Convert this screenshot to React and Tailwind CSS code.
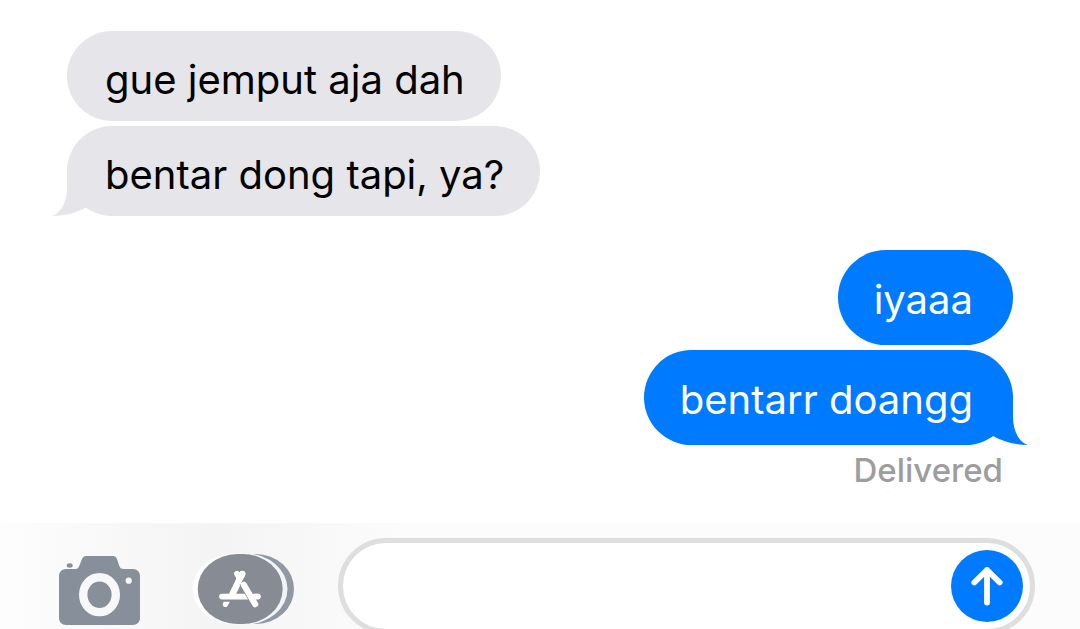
const messages = [
  { id: 1, text: 'gue jemput aja dah', mine: false },
  { id: 2, text: 'bentar dong tapi, ya?', mine: false, tail: true },
  { id: 3, text: 'iyaaa', mine: true },
  { id: 4, text: 'bentarr doangg', mine: true, tail: true },
];

function Tail({ mine }) {
  return (
    <svg
      viewBox="0 0 50 50"
      aria-hidden="true"
      className={`absolute bottom-0 h-[50px] w-[50px] ${
        mine ? '-right-[15px] -scale-x-100 text-[#007aff]' : '-left-[15px] text-[#e5e5ea]'
      }`}
    >
      <path
        fill="currentColor"
        d="M15 0V22C15 34 10 47 0 50C14 50 26 46 35 41L50 30V0Z"
      />
    </svg>
  );
}

function Bubble({ message }) {
  const { text, mine, tail } = message;

  return (
    <li
      className={`relative rounded-full text-[40px] ${
        mine
          ? 'bg-[#007aff] pr-10 pl-9 pt-1 leading-[91px] text-white'
          : 'bg-[#e5e5ea] pr-9 pl-[38px] pt-2 leading-[82px] text-black'
      }`}
    >
      {tail && <Tail mine={mine} />}
      <span className="relative">{text}</span>
    </li>
  );
}

function CameraIcon() {
  return (
    <svg viewBox="0 0 84 72" className="h-[72px] w-[84px]" aria-hidden="true">
      <g fill="#87909a">
        <path d="M8 15H17C20 15 21 13 22 10L24 5C25 3 26 2 28 2H55C57 2 58 3 59 5L61 11C62 14 63 15 66 15H75C79 15 82 18 82 22V64C82 68 79 71 75 71H8C4 71 1 68 1 64V22C1 18 4 15 8 15Z" />
        <ellipse cx="11.7" cy="11.5" rx="3" ry="2.2" />
      </g>
      <ellipse cx="41.5" cy="40.7" rx="16.3" ry="17.4" fill="none" stroke="#f8f8f9" strokeWidth="8.4" />
      <circle cx="70.7" cy="26.7" r="3.1" fill="#f8f8f9" />
    </svg>
  );
}

function AppStoreIcon() {
  return (
    <svg viewBox="0 0 104 72" className="h-[72px] w-[104px]" aria-hidden="true">
      <defs>
        <linearGradient id="ring">
          <stop offset="0" stopColor="#fff" />
          <stop offset="1" stopColor="#eff3f8" />
        </linearGradient>
      </defs>
      <rect x="22" y="1" width="80" height="70" rx="38" ry="35" fill="#8f98a3" />
      <rect x="0.5" y="0.5" width="95" height="71" rx="42" ry="35.5" fill="url(#ring)" />
      <rect x="5.7" y="1" width="85" height="70" rx="40" ry="35" fill="#868b94" />
      <g stroke="#fff" strokeLinecap="round" fill="none">
        <path d="M50.2 21L40.5 41" strokeWidth="6.4" />
        <path d="M45 20.7L47 24" strokeWidth="5.8" />
        <path d="M29.9 43.6H65.8" strokeWidth="5.6" />
      </g>
      <path d="M49.5 26.5L64.5 52.5" stroke="#868b94" strokeWidth="8.6" />
      <path d="M62 43.6H65.8" stroke="#fff" strokeWidth="5.6" strokeLinecap="round" />
      <path d="M51.8 31.8L63.2 51.2" stroke="#fff" strokeWidth="6.2" strokeLinecap="round" />
      <path d="M47 20.4L50.6 21L47.8 26Z" fill="#fff" />
      <path d="M50.2 21L46.5 28.6" stroke="#fff" strokeWidth="6.2" strokeLinecap="round" />
      <path d="M31.6 48.8H37.8L35.8 52.6C34 55.8 29.6 53.4 31 50.2Z" fill="#fff" />
    </svg>
  );
}

function Composer() {
  return (
    <form
      onSubmit={(e) => e.preventDefault()}
      className="flex h-[106px] shrink-0 items-start overflow-hidden bg-linear-to-r from-[#fdfdfd] via-[#f4f4f5] via-20% to-[#fcfcfc] to-38% pt-[15px] pr-[45px] pl-[58px]"
    >
      <button type="button" aria-label="Camera" className="mt-4">
        <CameraIcon />
      </button>
      <button type="button" aria-label="Apps" className="mt-[15px] ml-[50px]">
        <AppStoreIcon />
      </button>
      <div className="ml-[42px] flex h-24 min-w-0 flex-1 items-center rounded-full border-5 border-[#dedede] bg-white pr-[7px] pl-8">
        <input
          type="text"
          aria-label="Message"
          className="min-w-0 flex-1 bg-transparent text-[40px] text-black outline-none"
        />
        <button
          type="submit"
          aria-label="Send"
          className="flex h-[72px] w-[72px] shrink-0 items-center justify-center rounded-full bg-[#007aff]"
        >
          <svg viewBox="0 0 72 72" className="h-[72px] w-[72px]" aria-hidden="true">
            <path
              d="M36 52.5V20M23.3 32.5L36 20L48.7 32.5"
              fill="none"
              stroke="#fff"
              strokeWidth="5.8"
              strokeLinecap="round"
              strokeLinejoin="round"
            />
          </svg>
        </button>
      </div>
    </form>
  );
}

function App() {
  const received = messages.filter((m) => !m.mine);
  const sent = messages.filter((m) => m.mine);

  return (
    <div className="flex h-screen flex-col overflow-hidden bg-white font-['Inter','Liberation_Sans',sans-serif]">
      <main className="flex min-h-0 flex-1 flex-col px-[67px] pt-[31px]">
        <ul className="flex flex-col items-start gap-[5px]">
          {received.map((m) => (
            <Bubble key={m.id} message={m} />
          ))}
        </ul>
        <ul className="mt-[34px] flex flex-col items-end gap-[5px]">
          {sent.map((m) => (
            <Bubble key={m.id} message={m} />
          ))}
        </ul>
        <p className="mt-1 pr-[10px] text-right text-[33px] leading-[42px] font-medium text-[#9d9d9d]">
          Delivered
        </p>
      </main>
      <Composer />
    </div>
  );
}

export default App;
